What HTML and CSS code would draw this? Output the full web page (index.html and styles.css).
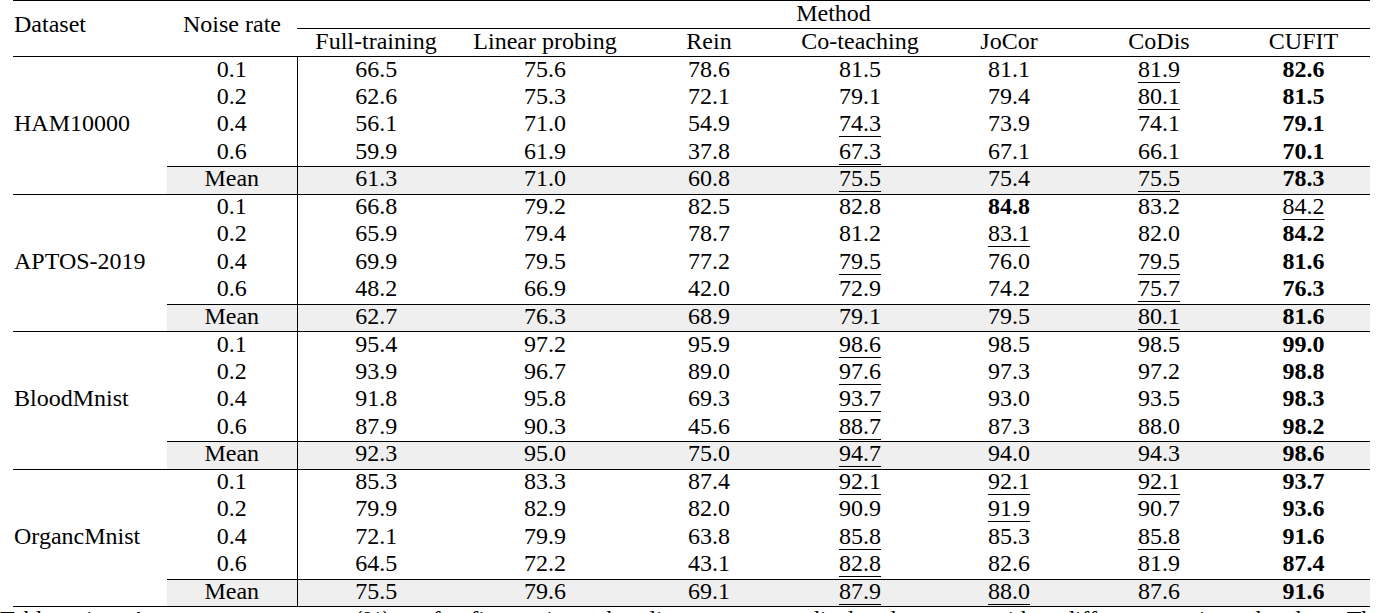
FILE: index.html
```html
<!DOCTYPE html>
<html>
<head>
<meta charset="utf-8">
<link rel="stylesheet" href="styles.css">
</head>
<body>
<table class="results">
  <colgroup>
    <col class="c-dataset"><col class="c-noise"><col class="c-full"><col class="c-linear"><col class="c-rein"><col class="c-cot"><col class="c-jocor"><col class="c-codis"><col class="c-cufit">
  </colgroup>
  <thead>
    <tr class="h1">
      <th rowspan="2" class="ds">Dataset</th>
      <th rowspan="2" class="nr">Noise rate</th>
      <th colspan="7" class="method">Method</th>
    </tr>
    <tr class="h2">
      <th>Full-training</th><th>Linear probing</th><th>Rein</th><th>Co-teaching</th><th>JoCor</th><th>CoDis</th><th>CUFIT</th>
    </tr>
  </thead>
  <tbody>
    <tr><td rowspan="5" class="ds">HAM10000</td><td class="nr">0.1</td><td>66.5</td><td>75.6</td><td>78.6</td><td>81.5</td><td>81.1</td><td><u>81.9</u></td><td><b>82.6</b></td></tr>
    <tr><td class="nr">0.2</td><td>62.6</td><td>75.3</td><td>72.1</td><td>79.1</td><td>79.4</td><td><u>80.1</u></td><td><b>81.5</b></td></tr>
    <tr><td class="nr">0.4</td><td>56.1</td><td>71.0</td><td>54.9</td><td><u>74.3</u></td><td>73.9</td><td>74.1</td><td><b>79.1</b></td></tr>
    <tr><td class="nr">0.6</td><td>59.9</td><td>61.9</td><td>37.8</td><td><u>67.3</u></td><td>67.1</td><td>66.1</td><td><b>70.1</b></td></tr>
    <tr class="mean"><td class="nr">Mean</td><td>61.3</td><td>71.0</td><td>60.8</td><td><u>75.5</u></td><td>75.4</td><td><u>75.5</u></td><td><b>78.3</b></td></tr>

    <tr><td rowspan="5" class="ds">APTOS-2019</td><td class="nr">0.1</td><td>66.8</td><td>79.2</td><td>82.5</td><td>82.8</td><td><b>84.8</b></td><td>83.2</td><td><u>84.2</u></td></tr>
    <tr><td class="nr">0.2</td><td>65.9</td><td>79.4</td><td>78.7</td><td>81.2</td><td><u>83.1</u></td><td>82.0</td><td><b>84.2</b></td></tr>
    <tr><td class="nr">0.4</td><td>69.9</td><td>79.5</td><td>77.2</td><td><u>79.5</u></td><td>76.0</td><td><u>79.5</u></td><td><b>81.6</b></td></tr>
    <tr><td class="nr">0.6</td><td>48.2</td><td>66.9</td><td>42.0</td><td>72.9</td><td>74.2</td><td><u>75.7</u></td><td><b>76.3</b></td></tr>
    <tr class="mean"><td class="nr">Mean</td><td>62.7</td><td>76.3</td><td>68.9</td><td>79.1</td><td>79.5</td><td><u>80.1</u></td><td><b>81.6</b></td></tr>

    <tr><td rowspan="5" class="ds">BloodMnist</td><td class="nr">0.1</td><td>95.4</td><td>97.2</td><td>95.9</td><td><u>98.6</u></td><td>98.5</td><td>98.5</td><td><b>99.0</b></td></tr>
    <tr><td class="nr">0.2</td><td>93.9</td><td>96.7</td><td>89.0</td><td><u>97.6</u></td><td>97.3</td><td>97.2</td><td><b>98.8</b></td></tr>
    <tr><td class="nr">0.4</td><td>91.8</td><td>95.8</td><td>69.3</td><td><u>93.7</u></td><td>93.0</td><td>93.5</td><td><b>98.3</b></td></tr>
    <tr><td class="nr">0.6</td><td>87.9</td><td>90.3</td><td>45.6</td><td><u>88.7</u></td><td>87.3</td><td>88.0</td><td><b>98.2</b></td></tr>
    <tr class="mean"><td class="nr">Mean</td><td>92.3</td><td>95.0</td><td>75.0</td><td><u>94.7</u></td><td>94.0</td><td>94.3</td><td><b>98.6</b></td></tr>

    <tr><td rowspan="5" class="ds">OrgancMnist</td><td class="nr">0.1</td><td>85.3</td><td>83.3</td><td>87.4</td><td><u>92.1</u></td><td><u>92.1</u></td><td><u>92.1</u></td><td><b>93.7</b></td></tr>
    <tr><td class="nr">0.2</td><td>79.9</td><td>82.9</td><td>82.0</td><td>90.9</td><td><u>91.9</u></td><td>90.7</td><td><b>93.6</b></td></tr>
    <tr><td class="nr">0.4</td><td>72.1</td><td>79.9</td><td>63.8</td><td><u>85.8</u></td><td>85.3</td><td><u>85.8</u></td><td><b>91.6</b></td></tr>
    <tr><td class="nr">0.6</td><td>64.5</td><td>72.2</td><td>43.1</td><td><u>82.8</u></td><td>82.6</td><td>81.9</td><td><b>87.4</b></td></tr>
    <tr class="mean"><td class="nr">Mean</td><td>75.5</td><td>79.6</td><td>69.1</td><td><u>87.9</u></td><td><u>88.0</u></td><td>87.6</td><td><b>91.6</b></td></tr>
  </tbody>
</table>
<p class="caption">Table 1: Average accuracy (%) of fine-tuning baselines on medical datasets with different noise levels. The</p>
</body>
</html>
```

FILE: styles.css
```css
html, body {
  margin: 0;
  padding: 0;
  background: #ffffff;
}
body {
  font-family: "Liberation Serif", "Times New Roman", serif;
  font-size: 24px;
  color: #000;
  overflow: hidden;
}
.results {
  margin-left: 13px;
  width: 1357px;
  table-layout: fixed;
  border-collapse: collapse;
  border-top: 1.5px solid #000;
}
.c-dataset { width: 154px; }
.c-noise { width: 130px; }
.c-full { width: 158px; }
.c-linear { width: 180px; }
.c-rein { width: 148px; }
.c-cot { width: 154px; }
.c-jocor { width: 144px; }
.c-codis { width: 156px; }
.c-cufit { width: 133px; }

.results th, .results td {
  padding: 0 0 4px 0;
  font-weight: normal;
  text-align: center;
  line-height: 22px;
  white-space: nowrap;
}
.results th.ds, .results td.ds {
  text-align: left;
  padding-left: 1px;
}
.results th.ds, .results th.nr {
  vertical-align: top;
  padding-top: 12px;
  padding-bottom: 0;
}
.h1 { height: 28px; }
.h1 th.method {
  border-bottom: 1px solid #000;
  vertical-align: middle;
}
.h2 { height: 28px; }
.h2 th {
  vertical-align: middle;
}
thead tr.h2 th, thead th.ds, thead th.nr {
  border-bottom: 1px solid #000;
}
tbody tr { height: 27.5px; }
tbody td.nr {
  border-right: 1px solid #000;
}
tbody td.ds {
  border-bottom: 1px solid #000;
}
.mean td {
  background: #efefef;
  border-top: 1px solid #000;
  border-bottom: 1px solid #000;
}
.results b {
  font-weight: bold;
}
.results u {
  text-decoration: underline;
  text-decoration-thickness: 1px;
  text-underline-offset: 5px;
}
.caption {
  margin: 0;
  padding: 0 4px 0 0;
  font-size: 24px;
  line-height: 24px;
  text-align: justify;
  text-align-last: justify;
}
```
